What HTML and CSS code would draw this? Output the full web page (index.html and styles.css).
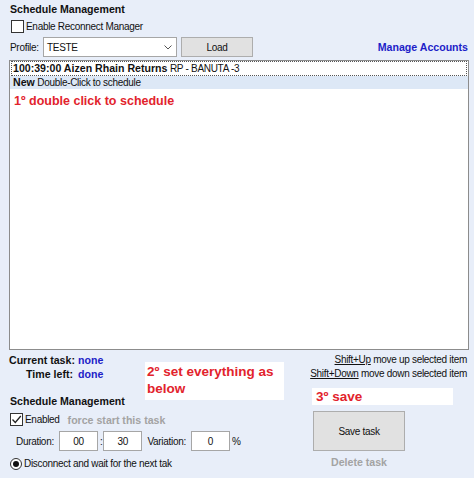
FILE: index.html
```html
<!DOCTYPE html>
<html>
<head>
<meta charset="utf-8">
<link rel="stylesheet" href="styles.css">
</head>
<body>
<div class="app">
  <div class="title">Schedule Management</div>
  <label class="check-row"><span class="box"></span><span>Enable Reconnect Manager</span></label>

  <div class="profile-row">
    <span class="lbl">Profile:</span>
    <div class="combo">
      <span>TESTE</span>
      <svg class="chev" width="8" height="5" viewBox="0 0 8 5"><path d="M0.5 0.5 L4 4 L7.5 0.5" fill="none" stroke="#555" stroke-width="1"/></svg>
    </div>
    <div class="btn load">Load</div>
    <span class="link">Manage Accounts</span>
  </div>

  <div class="list">
    <div class="item focus"><b>100:39:00 Aizen Rhain Returns</b> RP - BANUTA -3</div>
    <div class="item new"><b>New</b> Double-Click to schedule</div>
    <div class="hint">1º double click to schedule</div>
  </div>

  <div class="bottom">
    <div class="left">
      <div class="status">
        <div class="status-grid">
          <span class="k">Current task:</span><span class="v">none</span>
          <span class="k">Time left:</span><span class="v">done</span>
        </div>
        <div class="note note-2">2º set everything as<br>below</div>
      </div>

      <div class="title sub">Schedule Management</div>

      <div class="enabled-row">
        <span class="box checked">
          <svg width="11" height="11" viewBox="0 0 11 11"><path d="M1.5 5.5 L4.3 8.5 L9.8 2" fill="none" stroke="#222" stroke-width="1.3"/></svg>
        </span>
        <span>Enabled</span>
        <span class="muted force">force start this task</span>
      </div>

      <div class="duration-row">
        <span>Duration:</span>
        <div class="field">00</div>
        <span class="colon">:</span>
        <div class="field">30</div>
        <span class="var">Variation:</span>
        <div class="field">0</div>
        <span class="pct">%</span>
      </div>

      <div class="radio-row">
        <span class="radio"><span class="dot"></span></span>
        <span>Disconnect and wait for the next tak</span>
      </div>
    </div>

    <div class="right">
      <div class="keys">
        <div><u>Shift+Up</u> move up selected item</div>
        <div><u>Shift+Down</u> move down selected item</div>
      </div>
      <div class="note note-3">3º save</div>
      <div class="actions">
        <div class="btn save">Save task</div>
        <span class="muted delete">Delete task</span>
      </div>
    </div>
  </div>
</div>
</body>
</html>
```

FILE: styles.css
```css
* { box-sizing: border-box; }

html, body {
  margin: 0;
  padding: 0;
  background: #e8eef9;
}

body {
  width: 474px;
  height: 478px;
  overflow: hidden;
  font-family: "Liberation Sans", Arial, sans-serif;
  font-size: 10px;
  letter-spacing: -0.3px;
  color: #111;
}

b, .title, .link, .status-grid, .muted {
  font-weight: bold;
  font-size: 10.6px;
  letter-spacing: 0;
}

.app {
  padding: 2px 5px 0 9px;
}

.title {
  height: 14px;
  line-height: 14px;
  padding-left: 1px;
}

/* checkbox */
.check-row {
  display: flex;
  align-items: center;
  height: 14px;
  margin-top: 3px;
  padding-left: 2px;
}

.box {
  width: 13px;
  height: 13px;
  border: 1px solid #333;
  background: #fff;
  margin-right: 2px;
  display: inline-flex;
  align-items: center;
  justify-content: center;
  flex: none;
}

/* profile selector row */
.profile-row {
  display: flex;
  align-items: center;
  height: 20px;
  margin-top: 4px;
  padding-left: 1px;
}

.lbl { width: 33px; }

.combo {
  width: 134px;
  height: 20px;
  background: #fff;
  border: 1px solid #a6a6a6;
  display: flex;
  align-items: center;
  justify-content: space-between;
  padding: 0 4px 0 3px;
}

.chev { margin-top: 1px; }

.btn {
  background: #e1e1e1;
  border: 1px solid #adadad;
  display: flex;
  align-items: center;
  justify-content: center;
}

.load {
  width: 72px;
  height: 20px;
  margin-left: 4px;
}

.link {
  margin-left: auto;
  color: #1d1dc8;
  padding-right: 1px;
}

/* task list */
.list {
  margin-top: 3px;
  height: 290px;
  background: #fff;
  border: 1px solid #8c8c8c;
  padding: 0 1px;
}

.item {
  height: 14px;
  line-height: 13px;
  padding-left: 2px;
  white-space: nowrap;
}

.item.focus {
  border: 1px dotted #555;
  line-height: 13px;
  height: 15px;
  padding-left: 1px;
}

.item.new {
  background: #dde8f6;
  height: 13px;
  line-height: 13px;
  margin: 0 -1px;
  padding-left: 3px;
}

.hint {
  color: #e2232c;
  font-weight: bold;
  font-size: 12.5px;
  letter-spacing: 0;
  padding-left: 3px;
  margin-top: 4px;
  line-height: 16px;
}

/* lower area */
.bottom {
  display: flex;
  margin-top: 3px;
}

.left { flex: 1; }

.right {
  width: 175px;
  display: flex;
  flex-direction: column;
}

.status {
  position: relative;
  height: 28px;
}

.status-grid {
  display: grid;
  grid-template-columns: 64px auto;
  column-gap: 5px;
  line-height: 14px;
  white-space: nowrap;
}

.status-grid .k { text-align: right; }
.status-grid .v { color: #1d1dc8; }

.note {
  background: #fff;
  color: #e2232c;
  font-weight: bold;
  font-size: 13.5px;
  letter-spacing: 0;
  white-space: nowrap;
}

/* annotation box sitting over the status area */
.note-2 {
  position: absolute;
  left: 136px;
  top: 9px;
  width: 139px;
  height: 38px;
  padding: 1px 0 0 2px;
  line-height: 17px;
}

.sub { margin-top: 13px; }

.enabled-row {
  display: flex;
  align-items: center;
  height: 15px;
  margin-top: 4px;
  padding-left: 1px;
}

.muted { color: #a3a3a3; }

.force { margin-left: 8px; }

.duration-row {
  display: flex;
  align-items: center;
  height: 20px;
  margin-top: 4px;
  padding-left: 7px;
}

.field {
  width: 39px;
  height: 20px;
  background: #fff;
  border: 1px solid #a6a6a6;
  display: flex;
  align-items: center;
  justify-content: center;
  margin-left: 5px;
}

.colon { margin-left: 2px; }
.colon + .field { margin-left: 1px; }
.var { margin-left: 5px; }
.pct { margin-left: 2px; }

.radio-row {
  display: flex;
  align-items: center;
  height: 13px;
  margin-top: 6px;
  padding-left: 1px;
}

.radio {
  width: 12px;
  height: 12px;
  border: 1px solid #333;
  border-radius: 50%;
  background: #fff;
  display: inline-flex;
  align-items: center;
  justify-content: center;
  margin-right: 2px;
}

.dot {
  width: 6px;
  height: 6px;
  border-radius: 50%;
  background: #111;
}

.keys {
  text-align: right;
  line-height: 14px;
  padding-right: 2px;
  white-space: nowrap;
}

.note-3 {
  margin: 7px 0 0 18px;
  width: 141px;
  height: 17px;
  line-height: 17px;
  padding-left: 4px;
}

.actions {
  margin: 6px 0 0 19px;
  width: 92px;
  display: flex;
  flex-direction: column;
  align-items: center;
}

.save {
  width: 92px;
  height: 40px;
}

.delete {
  margin-top: 4px;
  line-height: 14px;
}
```
